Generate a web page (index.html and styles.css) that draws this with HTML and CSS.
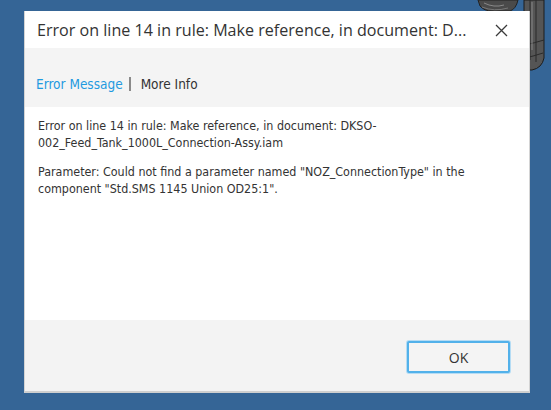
FILE: index.html
```html
<!DOCTYPE html>
<html>
<head>
<meta charset="utf-8">
<link rel="stylesheet" href="styles.css">
</head>
<body>
<svg class="bgobj" width="80" height="80" viewBox="0 0 80 80">
  <path d="M8 0 L10 6 Q14 11 22 11 L40 11 Q46 9 48 0 Z" fill="#4a4a4a" stroke="#222" stroke-width="1"/>
  <path d="M14 3 Q24 8 34 5" fill="none" stroke="#888" stroke-width="1"/>
  <path d="M12 7 Q24 12 38 8" fill="none" stroke="#777" stroke-width="1"/>
  <path d="M54 0 L74 0 L74 58 Q72 68 62 70 L54 70 Z" fill="#555" stroke="#1c1c1c" stroke-width="1"/>
  <path d="M60 0 L60 60 M66 0 L66 62 M55 45 Q64 43 74 40 M55 58 Q64 56 73 53" fill="none" stroke="#2a2a2a" stroke-width="1"/>
  <path d="M62 2 L62 50" stroke="#888" stroke-width="1"/>
</svg>
<div class="dialog">
  <div class="titlebar">
    <div class="title">Error on line 14 in rule: Make reference, in document: D...</div>
    <svg class="close" width="13" height="13" viewBox="0 0 13 13"><path d="M1 1 L12 12 M12 1 L1 12" stroke="#3a3a3a" stroke-width="1.3" fill="none"/></svg>
  </div>
  <div class="tabs">
    <span class="tab active">Error Message</span>
    <span class="sep"></span>
    <span class="tab">More Info</span>
  </div>
  <div class="content">
    <p>Error on line 14 in rule: Make reference, in document: DKSO-<br>002_Feed_Tank_1000L_Connection-Assy.iam</p>
    <p>Parameter: Could not find a parameter named "NOZ_ConnectionType" in the<br>component "Std.SMS 1145 Union OD25:1".</p>
  </div>
  <div class="footer">
    <button class="ok">OK</button>
  </div>
</div>
</body>
</html>
```
FILE: styles.css
```css
html, body {
  margin: 0;
  padding: 0;
}
body {
  width: 551px;
  height: 410px;
  background: #356596;
  position: relative;
  overflow: hidden;
  padding: 11px 0 0 24px;
  box-sizing: border-box;
  font-family: "DejaVu Sans Condensed", "DejaVu Sans", sans-serif;
  color: #333;
}
.bgobj {
  position: absolute;
  left: 470px;
  top: 0;
}
.dialog {
  position: relative;
  width: 506px;
  height: 382px;
  box-sizing: border-box;
  border: 1px solid #d4d4d4;
  border-top: 0;
  border-bottom: 2px solid #cfcfcf;
  background: #fff;
  display: flex;
  flex-direction: column;
}
.titlebar {
  height: 37px;
  display: flex;
  align-items: center;
  padding: 1px 21px 0 12px;
  justify-content: space-between;
  box-sizing: border-box;
}
.title {
  font-family: "Open Sans", sans-serif;
  font-size: 16.1px;
  color: #333;
  white-space: nowrap;
}
.tabs {
  height: 59px;
  background: #f4f4f4;
  display: flex;
  align-items: center;
  padding: 13px 0 0 11px;
  box-sizing: border-box;
  font-size: 13.5px;
}
.tab {
  color: #333;
}
.tab.active {
  color: #1f9ae0;
}
.sep {
  width: 2px;
  height: 14px;
  background: #8a8a8a;
  margin: 0 10px 0 6px;
}
.content {
  flex: 1;
  padding: 11px 12px 0 13px;
  font-size: 12.4px;
  line-height: 16.5px;
  color: #333;
}
.content p {
  margin: 0 0 13px;
}
.footer {
  height: 71px;
  background: #f3f3f3;
  display: flex;
  justify-content: flex-end;
  align-items: flex-start;
  padding: 21px 19px 0 0;
  box-sizing: border-box;
}
.ok {
  width: 103px;
  height: 32px;
  box-sizing: border-box;
  border: 2px solid #52b1ea;
  border-radius: 2px;
  box-shadow: 0 0 0 1px #b5dcf4;
  background: #f4f4f4;
  font-family: "Open Sans", sans-serif;
  font-size: 14px;
  color: #333;
  padding: 0;
}
```
